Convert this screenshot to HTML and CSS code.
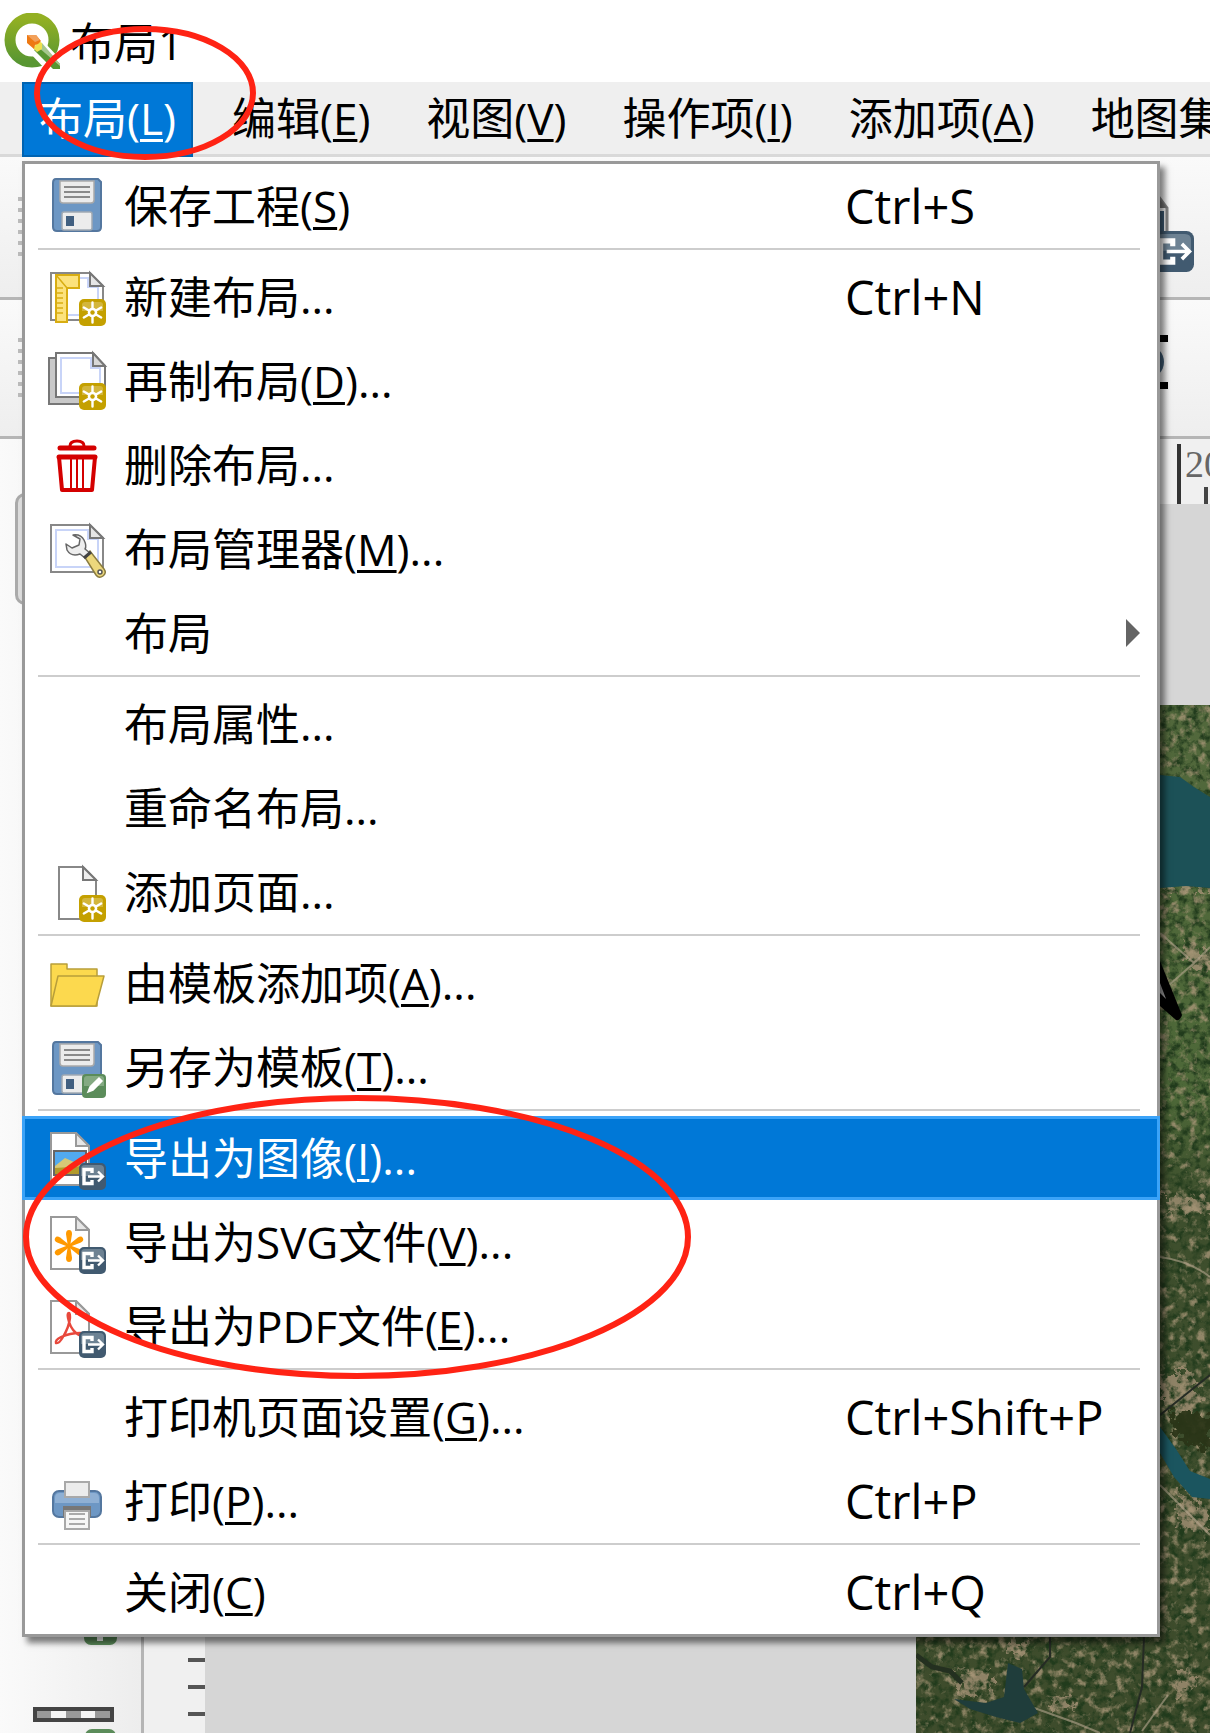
FILE: index.html
```html
<!DOCTYPE html>
<html lang="zh-CN">
  <head>
    <meta charset="UTF-8" />
    <meta name="viewport" content="width=device-width, initial-scale=1.0" />
    <title>布局1</title>
    <link rel="stylesheet" href="styles.css">
  </head>
  <body>
    <!-- 公用图标 -->
    <svg class="defs" width="0" height="0" aria-hidden="true">
      <defs>
        <linearGradient id="q-green" x1="0" y1="0" x2="0" y2="1">
          <stop offset="0" stop-color="#93b023" />
          <stop offset="1" stop-color="#589632" />
        </linearGradient>
        <symbol id="badge-new" viewBox="0 0 27 27">
          <rect width="27" height="27" rx="5" fill="#c4a000" />
          <path d="M3 12V6q0-3 3-3h15q3 0 3 3v6z" fill="#d3b63c" />
          <g stroke="#fff" stroke-width="2.400" stroke-linecap="round">
            <path d="M13.500 3.500v20M4.800 8.500l17.400 10M22.200 8.500l-17.400 10" />
          </g>
          <circle cx="13.500" cy="13.500" r="4.800" fill="#fff" />
          <circle cx="13.500" cy="13.500" r="2.200" fill="#c4a000" />
        </symbol>
        <symbol id="badge-export" viewBox="0 0 27 27">
          <rect width="27" height="27" rx="5" fill="#415a70" />
          <path d="M2 13V6q0-4 4-4h15q4 0 4 4v7z" fill="#6d8293" />
          <path d="M13 10V6.500H5v14h8V17" fill="none" stroke="#fff" stroke-width="3.400" />
          <path d="M9 13.500h14M19 8.500l5 5-5 5" fill="none" stroke="#fff" stroke-width="2.400" />
        </symbol>
        <symbol id="floppy" viewBox="0 0 50 54">
          <path d="M4 1h42l3 3v45q0 4-4 4H5q-4 0-4-4V5q0-4 3-4z" fill="#6d97c4" stroke="#54779f" stroke-width="2" />
          <path d="M8 3h34v19q0 3-3 3H11q-3 0-3-3z" fill="#ececec" stroke="#a9a9a9" stroke-width="1.500" />
          <path d="M12 9h26M12 14h26M12 19h26" stroke="#8a8a8a" stroke-width="2.200" />
          <rect x="10" y="34" width="30" height="18" rx="2" fill="#ececec" stroke="#a0a9b2" stroke-width="1.500" />
          <rect x="14" y="38" width="8" height="10" fill="#415f80" />
        </symbol>
        <symbol id="small-page" viewBox="0 0 40 54">
          <path d="M1 1h25l13 13v39H1z" fill="#fff" stroke="#999" stroke-width="2" />
          <path d="M26 1v13h13z" fill="#e6e6e6" stroke="#999" stroke-width="2" />
        </symbol>
      </defs>
    </svg>

    <div class="window">
      <header class="titlebar">
        <svg class="logo" viewBox="0 0 56 56" aria-hidden="true">
          <circle cx="28" cy="27" r="22" fill="none" stroke="url(#q-green)" stroke-width="11" />
          <path d="M31 28l25 25v3H41L25 39z" fill="#fff" />
          <path d="M35 30h6l15 16v7z" fill="#fff" />
          <path d="M36 31l20 20v5h-7L30 37z" fill="#589632" />
          <path d="M38 30l18 21v2L34 34z" fill="#a5c78e" />
          <path d="M35 28l3 2v6l-5 3-4-4z" fill="#eee04e" />
          <path d="M23 22h9l5 6-3 3-3 1-1 4-7-6z" fill="#ee7913" />
          <path d="M23 22h9l4 5-5 2z" fill="#f2a05a" />
        </svg>
        <h1 class="title">布局1</h1>
      </header>

      <nav class="menubar">
        <button class="menubar-item active" type="button">布局(<u>L</u>)</button>
        <button class="menubar-item" type="button">编辑(<u>E</u>)</button>
        <button class="menubar-item" type="button">视图(<u>V</u>)</button>
        <button class="menubar-item" type="button">操作项(<u>I</u>)</button>
        <button class="menubar-item" type="button">添加项(<u>A</u>)</button>
        <button class="menubar-item" type="button">地图集</button>

        <div class="menu">
          <button class="menu-item" type="button">
            <svg class="icon" viewBox="0 0 58 58"><use href="#floppy" x="4" y="1" width="50" height="54" /></svg>
            <span>保存工程(<u>S</u>)</span>
            <kbd>Ctrl+S</kbd>
          </button>
          <hr>
          <button class="menu-item" type="button">
            <svg class="icon" viewBox="0 0 58 58">
              <path d="M3 5h39l13 13v34H3z" fill="#fff" stroke="#888" stroke-width="2" />
              <path d="M8 10h32v9h10v28H8z" fill="none" stroke="#c8d4f8" stroke-width="2" />
              <path d="M42 5v13h13z" fill="#e6e6e6" stroke="#777" stroke-width="2" />
              <path d="M8 7h23v13H19v34H8z" fill="#fce27c" stroke="#d8ad12" stroke-width="2" />
              <path d="M8 7l11 13M9 20h6M9 25h6M9 30h6M9 35h6M9 40h6M9 45h6" stroke="#d8ad12" stroke-width="1.500" />
              <use href="#badge-new" x="31" y="31" width="27" height="27" />
            </svg>
            <span>新建布局...</span>
            <kbd>Ctrl+N</kbd>
          </button>
          <button class="menu-item" type="button">
            <svg class="icon" viewBox="0 0 58 58">
              <path d="M1 6h40v46H1z" fill="#c9c9c9" stroke="#777" stroke-width="2" />
              <path d="M8 1h37l12 13v31H8z" fill="#fff" stroke="#777" stroke-width="2" />
              <path d="M13 6h30v10h9v25H13z" fill="none" stroke="#c8d4f8" stroke-width="2" />
              <path d="M45 1v13h12z" fill="#d8d8d8" stroke="#777" stroke-width="2" />
              <use href="#badge-new" x="31" y="31" width="27" height="27" />
            </svg>
            <span>再制布局(<u>D</u>)...</span>
          </button>
          <button class="menu-item" type="button">
            <svg class="icon" viewBox="0 0 58 58" fill="none" stroke="#d40000">
              <path d="M12 12h34" stroke-width="5" stroke-linecap="round" />
              <path d="M22 10q0-5 7-5t7 5" stroke-width="3" />
              <path d="M11 21h36l-3 33H14z" stroke-width="4" stroke-linejoin="round" />
              <path d="M11 21h36" stroke-width="5" stroke-linecap="round" />
              <path d="M23 22v31M29 22v31M35 22v31" stroke-width="2" />
            </svg>
            <span>删除布局...</span>
          </button>
          <button class="menu-item" type="button">
            <svg class="icon" viewBox="0 0 58 58">
              <path d="M3 5h39l13 13v34H3z" fill="#fff" stroke="#888" stroke-width="2" />
              <path d="M8 10h32v9h10v28H8z" fill="none" stroke="#c8d4f8" stroke-width="2" />
              <path d="M42 5v13h13z" fill="#e6e6e6" stroke="#777" stroke-width="2" />
              <path d="M36 36l6-5 14 18q3 4-1 7t-7-1z" fill="#ecd77c" stroke="#8a7c40" stroke-width="1.500" />
              <circle cx="52" cy="52" r="2" fill="#fff" stroke="#555" stroke-width="1.500" />
              <path d="M25 15q8-1 11 5t1 9l5 4-5 5-5-4q-9 3-13-4l-1-6 6 4 7-3 1-6z" fill="#eee" stroke="#666" stroke-width="1.500" stroke-linejoin="round" />
              <path d="M36 38l7-6" stroke="#444" stroke-width="3" />
            </svg>
            <span>布局管理器(<u>M</u>)...</span>
          </button>
          <button class="menu-item" type="button" aria-haspopup="true">
            <span>布局</span>
            <i class="submenu-arrow"></i>
          </button>
          <hr>
          <button class="menu-item" type="button"><span>布局属性...</span></button>
          <button class="menu-item" type="button"><span>重命名布局...</span></button>
          <button class="menu-item" type="button">
            <svg class="icon" viewBox="0 0 58 58">
              <path d="M11 4h24l13 13v39H11z" fill="#fff" stroke="#888" stroke-width="2" />
              <path d="M35 4v13h13z" fill="#eee" stroke="#777" stroke-width="2" />
              <use href="#badge-new" x="31" y="32" width="27" height="27" />
            </svg>
            <span>添加页面...</span>
          </button>
          <hr>
          <button class="menu-item" type="button">
            <svg class="icon" viewBox="0 0 58 58" fill="#fcd94e" stroke="#b89e3a" stroke-width="1.500" stroke-linejoin="round">
              <path d="M3 10h16v5h30v37H3z" />
              <path d="M10 22h46l-8 30H3z" />
            </svg>
            <span>由模板添加项(<u>A</u>)...</span>
          </button>
          <button class="menu-item" type="button">
            <svg class="icon" viewBox="0 0 58 58">
              <use href="#floppy" x="4" y="3" width="50" height="54" />
              <rect x="34" y="36" width="24" height="24" rx="4" fill="#5b8c5a" />
              <path d="M36 48v-7q0-3 3-3h14q3 0 3 3v7z" fill="#84aa82" />
              <path d="M40 54l2-5 9-9 3 3-9 9z" fill="#fff" stroke="#fff" stroke-width="1.500" />
            </svg>
            <span>另存为模板(<u>T</u>)...</span>
          </button>
          <hr>
          <button class="menu-item highlighted" type="button">
            <svg class="icon" viewBox="0 0 58 58">
              <use href="#small-page" x="2" y="3" width="40" height="54" />
              <rect x="6" y="22" width="32" height="24" fill="#51aaf0" stroke="#666" stroke-width="2" />
              <path d="M7 37l10-8 9 4 11 3v9H7z" fill="#d6c877" />
              <path d="M7 39l30-2v8H7z" fill="#b29a2b" />
              <use href="#badge-export" x="31" y="34" width="27" height="27" />
            </svg>
            <span>导出为图像(<u>I</u>)...</span>
          </button>
          <button class="menu-item" type="button">
            <svg class="icon" viewBox="0 0 58 58">
              <use href="#small-page" x="2" y="3" width="40" height="54" />
              <g fill="#ff9900">
                <path id="petal" d="M20 34l-2-13q0-4 3-4t3 4l-2 13z" />
                <use href="#petal" transform="rotate(60 21 33)" />
                <use href="#petal" transform="rotate(120 21 33)" />
                <use href="#petal" transform="rotate(180 21 33)" />
                <use href="#petal" transform="rotate(240 21 33)" />
                <use href="#petal" transform="rotate(300 21 33)" />
              </g>
              <use href="#badge-export" x="31" y="34" width="27" height="27" />
            </svg>
            <span>导出为SVG文件(<u>V</u>)...</span>
          </button>
          <button class="menu-item" type="button">
            <svg class="icon" viewBox="0 0 58 58">
              <use href="#small-page" x="2" y="3" width="40" height="54" />
              <path d="M21 16q-2 0-1 5 2 10 8 15 5 4 9 3 1-3-5-3-10 0-19 4-6 3-5 6 3 1 7-6 6-10 7-19 0-5-1-5z" fill="none" stroke="#e8483c" stroke-width="2.400" />
              <use href="#badge-export" x="31" y="34" width="27" height="27" />
            </svg>
            <span>导出为PDF文件(<u>E</u>)...</span>
          </button>
          <hr>
          <button class="menu-item" type="button">
            <span>打印机页面设置(<u>G</u>)...</span>
            <kbd>Ctrl+Shift+P</kbd>
          </button>
          <button class="menu-item" type="button">
            <svg class="icon" viewBox="0 0 58 58">
              <rect x="5" y="19" width="48" height="26" rx="6" fill="#6d97c4" stroke="#54779f" stroke-width="2" />
              <path d="M7 31v-5q0-5 5-5h34q5 0 5 5v5z" fill="#8fb0d4" />
              <rect x="17" y="10" width="24" height="15" fill="#ececec" stroke="#a9a9a9" stroke-width="2" />
              <path d="M15 34h28v11H15z" fill="#777" />
              <rect x="17" y="39" width="24" height="18" fill="#f6f6f6" stroke="#a9a9a9" stroke-width="2" />
              <path d="M21 42h16M21 47h16M21 52h16" stroke="#aaa" stroke-width="2" />
            </svg>
            <span>打印(<u>P</u>)...</span>
            <kbd>Ctrl+P</kbd>
          </button>
          <hr>
          <button class="menu-item" type="button">
            <span>关闭(<u>C</u>)</span>
            <kbd>Ctrl+Q</kbd>
          </button>
        </div>
      </nav>

      <div class="toolbar">
        <div class="handle"></div>
        <svg class="tool-icon" viewBox="0 0 60 90" aria-hidden="true">
          <path d="M4 14h20l9 12v30H4z" fill="#fff" stroke="#888" stroke-width="3" />
          <path d="M22 14v12h12z" fill="#777" />
          <path d="M6 29h24v30H6z" fill="#415f78" />
          <use href="#badge-export" x="19" y="49" width="41" height="41" />
        </svg>
      </div>
      <div class="toolbar">
        <div class="handle"></div>
        <svg class="tool-icon" viewBox="0 0 60 90" aria-hidden="true">
          <circle cx="13" cy="39" r="17" fill="#415f78" />
          <path d="M26 12h8v7h-8zM26 59h8v7h-8z" />
        </svg>
      </div>

      <main class="workspace">
        <aside class="toolbox">
          <div class="toolbox-tab"></div>
          <svg class="toolbox-icons" viewBox="0 0 141 113" aria-hidden="true">
            <rect x="84" y="0" width="33" height="25" rx="7" fill="#5b8c5a" />
            <path d="M100 10v11" stroke="#fff" stroke-width="6" />
            <path d="M33 87h81v15H33z" fill="#444" />
            <path d="M37 91h73v7H37z" fill="#999" />
            <path d="M51 91h15v7H51zM81 91h14v7H81z" fill="#f5f5f5" />
            <rect x="85" y="109" width="31" height="25" rx="7" fill="#5b8c5a" />
          </svg>
        </aside>
        <div class="ruler-top">
          <span class="ruler-mark">20</span>
        </div>
        <div class="ruler-left">
          <i class="tick"></i>
          <i class="tick"></i>
          <i class="tick"></i>
        </div>
        <div class="canvas">
          <svg class="map" aria-hidden="true">
            <defs>
              <linearGradient id="land" x1="0" y1="0" x2="0" y2="1">
                <stop offset="0" stop-color="#52683c" />
                <stop offset="0.380" stop-color="#4d6838" />
                <stop offset="0.480" stop-color="#3e4f2d" />
                <stop offset="1" stop-color="#3e4c2c" />
              </linearGradient>
              <filter id="fields" x="0" y="0" width="100%" height="100%" color-interpolation-filters="sRGB">
                <feTurbulence type="fractalNoise" baseFrequency="0.110" numOctaves="4" seed="4" />
                <feColorMatrix values="0 0 0 0 0.660  0 0 0 0 0.590  0 0 0 0 0.470  3.600 0 0 0 -1.850" />
              </filter>
              <filter id="woods" x="0" y="0" width="100%" height="100%" color-interpolation-filters="sRGB">
                <feTurbulence type="fractalNoise" baseFrequency="0.130" numOctaves="4" seed="9" />
                <feColorMatrix values="0 0 0 0 0.130  0 0 0 0 0.230  0 0 0 0 0.110  0 3 0 0 -1.250" />
              </filter>
              <filter id="rough" color-interpolation-filters="sRGB">
                <feTurbulence type="fractalNoise" baseFrequency="0.120" numOctaves="3" seed="2" />
                <feDisplacementMap in="SourceGraphic" scale="30" xChannelSelector="R" yChannelSelector="G" />
              </filter>
            </defs>
            <rect width="100%" height="100%" fill="url(#land)" />
            <g fill="#a39075" opacity="0.800" filter="url(#rough)">
              <path d="M246 168h20l28 10v6h-48zM270 235l24 14v20l-28-12zM250 492h44v14h-44zM246 668h28l14 26-14 14-28-6zM262 780l32 30v20l-30-10zM42 965h30l4 22-20 8-18-12zM130 990l24 2 8 12-26-2zM265 960l14 6-8 26-14-4zM92 935h22l-4 16-20-2z" />
            </g>
            <rect width="100%" height="100%" filter="url(#woods)" />
            <rect width="100%" height="100%" filter="url(#fields)" opacity="0.800" />
            <g fill="none" stroke="#b5a68f" stroke-width="2" opacity="0.600">
              <path d="M244 228l34 30-34 30M278 258l16-16M244 552q30 4 50 20M244 780l50 50M110 1000l50 18 24 10M252 990l-26 36" />
            </g>
            <path d="M244 70l20 2 14 10 16 10v91l-24-2-26 2z" fill="#1c5157" />
            <path d="M256 706l38 2v36l-20-4-18-16z" fill="#2a3417" opacity="0.900" filter="url(#rough)" />
            <path d="M244 722l16 22 14 22 20 8v20l-18-2-18-20-14-24z" fill="#1b555f" />
            <path d="M92 958l14 6 2 20 14 24-18 10-24-6-26-8-16-10 32 4 18-6z" fill="#1f3d3b" />
            <path d="M0 950l16 12 18 4 12 12" fill="none" stroke="#243020" stroke-width="5" />
            <path d="M244 710l50-40M134 930v22l-26 30M228 932l-2 50-12 46" fill="none" stroke="#252b24" stroke-width="2" />
            <path d="M244 256l22 54q-2 6-6 5l-16-14z" />
            <path d="M244 278l6 16-6-6z" fill="#aaa" />
          </svg>
        </div>
      </main>

      <!-- 红圈标注 -->
      <svg class="mark mark-menu" viewBox="0 0 222 134" aria-hidden="true">
        <ellipse cx="111" cy="67" rx="108" ry="64" />
      </svg>
      <svg class="mark mark-export" viewBox="0 0 668 284" aria-hidden="true">
        <ellipse cx="334" cy="142" rx="331" ry="139" />
      </svg>
    </div>
  </body>
</html>
```
FILE: styles.css
```css
* {
  box-sizing: border-box;
}

body {
  margin: 0;
  font-family: "Open Sans", "Noto Sans CJK SC", sans-serif;
  font-size: 44px;
  line-height: 60px;
  color: #000;
  background-color: #fff;
}

button {
  margin: 0;
  border: none;
  background: none;
  color: inherit;
  font: inherit;
  text-align: left;
  white-space: nowrap;
}

u {
  text-decoration-thickness: 3px;
  text-underline-offset: 4px;
  text-decoration-skip-ink: none;
}

.defs {
  position: absolute;
}

.window {
  position: relative;
  display: flex;
  flex-direction: column;
  min-height: 100vh;
  overflow: hidden;
}

/* 标题栏 */
.titlebar {
  display: flex;
  align-items: center;
  gap: 10px;
  height: 82px;
  padding: 0 4px;
}

.logo {
  width: 56px;
  height: 56px;
}

.title {
  margin: 0;
  padding-top: 4px;
  font-size: 44px;
  font-weight: 400;
}

/* 菜单栏 */
.menubar {
  position: relative;
  z-index: 1;
  display: flex;
  gap: 22px;
  height: 75px;
  padding-left: 22px;
  background-color: #efefef;
  box-shadow: inset 0 -3px #d9d9d9;
}

.menubar-item {
  flex: none;
  padding: 0 17px 4px;
}

.menubar-item.active {
  background-color: #0078d7;
  border: 2px solid #0063b1;
  padding: 0 15px 4px;
  color: #fff;
}

/* 下拉菜单 */
.menu {
  position: absolute;
  top: 79px;
  left: 22px;
  right: 50px;
  border: 3px solid #999;
  background-color: #fff;
  box-shadow: 5px 6px 6px rgba(0, 0, 0, 0.5);
}

.menu hr {
  height: 7px;
  margin: 0 17px 0 13px;
  border: none;
  border-top: 2px solid #cdcdcd;
}

.menu-item {
  display: grid;
  grid-template-columns: 76px 1fr 312px;
  align-items: center;
  width: 100%;
  height: 84px;
  padding: 0 0 0 23px;
}

.menu-item span {
  grid-column: 2;
}

.menu-item kbd {
  font-family: inherit;
  font-size: 47px;
}

.menu-item.highlighted {
  width: calc(100% + 6px);
  margin: 0 -3px;
  border: 3px solid #3ba3f8;
  background-color: #0078d7;
  color: #fff;
}

.icon {
  width: 58px;
  height: 58px;
  overflow: visible;
}

.submenu-arrow {
  justify-self: end;
  margin-right: 17px;
  border: 14px solid transparent;
  border-left-color: #646464;
  border-right-width: 0;
}

/* 工具栏 */
.toolbar {
  display: flex;
  justify-content: space-between;
  align-items: center;
  height: 143px;
  padding: 0 16px 0 18px;
  border-bottom: 3px solid #b5b5b5;
  background: linear-gradient(#fafafa, #eee);
}

.toolbar + .toolbar {
  height: 139px;
}

.handle {
  width: 4px;
  height: 60px;
  background: repeating-linear-gradient(#bbb 0 4px, transparent 4px 11px);
}

.tool-icon {
  width: 60px;
  height: 90px;
}

/* 工作区 */
.workspace {
  flex: 1;
  display: grid;
  grid-template-columns: 144px 61px 1fr;
  grid-template-rows: 65px 1fr;
}

.toolbox {
  grid-row: 1 / 3;
  display: flex;
  flex-direction: column;
  justify-content: space-between;
  border-right: 3px solid #b5b5b5;
  background: linear-gradient(to right, #fafafa, #ededed);
}

.toolbox-tab {
  width: 40px;
  height: 112px;
  margin: 54px 0 0 15px;
  border: 3px solid #aaa;
  border-radius: 10px;
  background-color: #ddd;
}

.toolbox-icons {
  width: 141px;
  height: 113px;
}

.ruler-top {
  grid-column: 2 / 4;
  display: flex;
  justify-content: flex-end;
  background:
    linear-gradient(#444, #444) right 2px bottom / 4px 17px no-repeat,
    #f0f0f0;
}

.ruler-mark {
  width: 33px;
  height: 60px;
  margin-top: 5px;
  padding-left: 4px;
  border-left: 4px solid #333;
  font-family: "Liberation Serif", serif;
  font-size: 38px;
  line-height: 40px;
  color: #666;
}

.ruler-left {
  display: flex;
  flex-direction: column;
  justify-content: flex-end;
  align-items: flex-end;
  gap: 23px;
  padding-bottom: 17px;
  background-color: #f0f0f0;
}

.tick {
  width: 17px;
  height: 4px;
  background-color: #555;
}

.canvas {
  display: flex;
  padding: 201px 0 0 711px;
  background-color: #d6d6d6;
}

.map {
  flex: 1;
  width: 100%;
  min-width: 0;
  height: auto;
}

/* 标注 */
.mark {
  position: absolute;
  z-index: 2;
  fill: none;
  stroke: #ff2314;
  stroke-width: 6px;
  pointer-events: none;
}

.mark-menu {
  top: 26px;
  left: 34px;
  width: 222px;
}

.mark-export {
  top: 1095px;
  left: 23px;
  width: 668px;
}
```
